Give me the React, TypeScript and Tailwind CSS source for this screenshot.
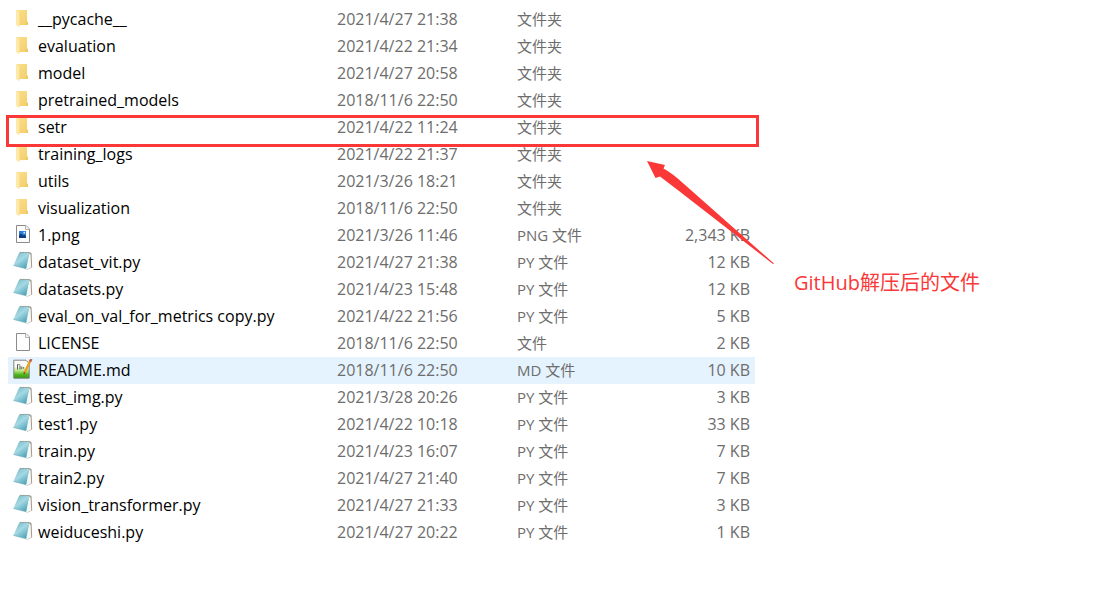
import type { ReactNode } from 'react';

type FileKind = 'folder' | 'image' | 'script' | 'blank' | 'markdown';

interface FileRow {
  name: string;
  modified: string;
  type: string;
  size?: string;
  kind: FileKind;
  selected?: boolean;
}

const files: FileRow[] = [
  { name: '__pycache__', modified: '2021/4/27 21:38', type: '文件夹', kind: 'folder' },
  { name: 'evaluation', modified: '2021/4/22 21:34', type: '文件夹', kind: 'folder' },
  { name: 'model', modified: '2021/4/27 20:58', type: '文件夹', kind: 'folder' },
  { name: 'pretrained_models', modified: '2018/11/6 22:50', type: '文件夹', kind: 'folder' },
  { name: 'setr', modified: '2021/4/22 11:24', type: '文件夹', kind: 'folder' },
  { name: 'training_logs', modified: '2021/4/22 21:37', type: '文件夹', kind: 'folder' },
  { name: 'utils', modified: '2021/3/26 18:21', type: '文件夹', kind: 'folder' },
  { name: 'visualization', modified: '2018/11/6 22:50', type: '文件夹', kind: 'folder' },
  { name: '1.png', modified: '2021/3/26 11:46', type: 'PNG 文件', size: '2,343 KB', kind: 'image' },
  { name: 'dataset_vit.py', modified: '2021/4/27 21:38', type: 'PY 文件', size: '12 KB', kind: 'script' },
  { name: 'datasets.py', modified: '2021/4/23 15:48', type: 'PY 文件', size: '12 KB', kind: 'script' },
  { name: 'eval_on_val_for_metrics copy.py', modified: '2021/4/22 21:56', type: 'PY 文件', size: '5 KB', kind: 'script' },
  { name: 'LICENSE', modified: '2018/11/6 22:50', type: '文件', size: '2 KB', kind: 'blank' },
  { name: 'README.md', modified: '2018/11/6 22:50', type: 'MD 文件', size: '10 KB', kind: 'markdown', selected: true },
  { name: 'test_img.py', modified: '2021/3/28 20:26', type: 'PY 文件', size: '3 KB', kind: 'script' },
  { name: 'test1.py', modified: '2021/4/22 10:18', type: 'PY 文件', size: '33 KB', kind: 'script' },
  { name: 'train.py', modified: '2021/4/23 16:07', type: 'PY 文件', size: '7 KB', kind: 'script' },
  { name: 'train2.py', modified: '2021/4/27 21:40', type: 'PY 文件', size: '7 KB', kind: 'script' },
  { name: 'vision_transformer.py', modified: '2021/4/27 21:33', type: 'PY 文件', size: '3 KB', kind: 'script' },
  { name: 'weiduceshi.py', modified: '2021/4/27 20:22', type: 'PY 文件', size: '1 KB', kind: 'script' },
];

const icons: Record<FileKind, ReactNode> = {
  folder: (
    <>
      <path d="M3.5 2H14V13.5L15 14.2V17H5Z" fill="url(#folderBody)" />
      <path d="M14 13.5L15 14.2V17H13V14.5Z" fill="#efc764" />
      <path d="M3 2.2L6.8 4V16.2L5.8 18.8L3 17Z" fill="#ffe9a8" />
      <path d="M6.8 4V16.2L5.8 18.8" fill="none" stroke="#f0cf78" strokeWidth="0.5" />
    </>
  ),
  image: (
    <>
      <path d="M3.5 1.5H13L16.5 5V18.5H3.5Z" fill="#fdfdfd" stroke="#8b8b8b" />
      <path d="M12.5 1.5V5.5H16.5" fill="#f3f3f3" stroke="#a5a5a5" strokeWidth="0.8" />
      <rect x="6" y="7" width="7" height="7" fill="#2f7fd6" />
      <path d="M6 11L8 9.5L10.3 11.5L11.3 10.8L13 12V14H6Z" fill="#0b3f7f" />
      <circle cx="11.3" cy="8.7" r="0.9" fill="#d9f0ff" />
    </>
  ),
  script: (
    <>
      <path d="M7 1L17.2 1.2L18.6 2.4L19.2 16.6L14 18.8Z" fill="#a49d8e" />
      <path d="M16.4 2.6L17.6 4L18.2 16.6L13.8 18.4L12 17.6Z" fill="#f7f7f5" />
      <path d="M6.2 1.6H16.4L13.2 17.8L0.4 14.4Z" fill="url(#scriptCover)" />
      <path d="M13.2 17.8L0.4 14.4" stroke="#6fa9b5" strokeWidth="0.6" />
      <path d="M7 1.4H16.6" stroke="#8b9193" strokeWidth="0.8" strokeDasharray="1 0.6" />
    </>
  ),
  blank: (
    <>
      <path d="M3.5 1.5H13L16.5 5V18.5H3.5Z" fill="#fdfdfd" stroke="#8b8b8b" />
      <path d="M12.5 1.5V5.5H16.5" fill="#f3f3f3" stroke="#a5a5a5" strokeWidth="0.8" />
    </>
  ),
  markdown: (
    <>
      <path d="M0.8 1.2H13L16.2 4.5V19.2H0.8Z" fill="url(#markdownPage)" stroke="#777" strokeWidth="0.9" />
      <path d="M4.5 5.5V10.5M7 6.5V10.5M8.8 7.5V10M10.6 8.2V9.6" stroke="#333" strokeWidth="0.8" />
      <path d="M4.5 5.7H7" stroke="#333" strokeWidth="0.6" />
      <path d="M17.4 1.5L11.5 14" stroke="#e9a023" strokeWidth="2.4" />
      <path d="M18.4 0L17 2.6" stroke="#c3604d" strokeWidth="2.4" />
      <path d="M10.6 12.8L12.7 14L10.7 15.8Z" fill="#6b5030" />
    </>
  ),
};

function FileIcon({ kind }: { kind: FileKind }) {
  return (
    <svg className="h-5 w-5 shrink-0" viewBox="0 0 20 20" fill="none" aria-hidden="true">
      {icons[kind]}
    </svg>
  );
}

// Gradients shared by all the file icons
function IconGradients() {
  return (
    <svg className="absolute h-0 w-0" aria-hidden="true">
      <defs>
        <linearGradient id="folderBody" x1="0" y1="0" x2="1" y2="1">
          <stop offset="0" stopColor="#fbe08d" />
          <stop offset="1" stopColor="#f3cd68" />
        </linearGradient>
        <linearGradient id="scriptCover" x1="0" y1="0" x2="0.7" y2="1">
          <stop offset="0" stopColor="#6fb4c4" />
          <stop offset="0.5" stopColor="#a5d9e3" />
          <stop offset="1" stopColor="#4ba3b8" />
        </linearGradient>
        <linearGradient id="markdownPage" x1="0" y1="0" x2="0" y2="1">
          <stop offset="0.35" stopColor="#f8fbf4" />
          <stop offset="0.6" stopColor="#b4e37d" />
          <stop offset="0.8" stopColor="#4cb81c" />
          <stop offset="1" stopColor="#3a9a14" />
        </linearGradient>
      </defs>
    </svg>
  );
}

export default function App() {
  return (
    <main className="relative min-h-screen bg-white px-2 pt-1.5 font-['Open_Sans','Noto_Sans_CJK_SC',sans-serif] text-[16px] leading-[27px] text-[#6d6d6d]">
      <IconGradients />

      <table className="w-full max-w-[747px] table-fixed border-collapse">
        <colgroup>
          <col />
          <col className="w-[180px]" />
          <col className="w-[118px]" />
          <col className="w-[120px]" />
        </colgroup>
        <tbody>
          {files.map((file) => (
            <tr key={file.name} className={file.selected ? 'bg-[#e5f3ff]' : ''}>
              <td className="p-0">
                <div className="flex h-[27px] items-start gap-[5px] pl-[5px] whitespace-nowrap text-black">
                  <div className="pt-0.5">
                    <FileIcon kind={file.kind} />
                  </div>
                  <span>{file.name}</span>
                </div>
              </td>
              <td className="p-0 whitespace-nowrap">{file.modified}</td>
              <td className="p-0 text-[15px] leading-[27px] whitespace-nowrap">{file.type}</td>
              <td className="p-0 pr-[5px] text-right whitespace-nowrap">{file.size}</td>
            </tr>
          ))}
        </tbody>
      </table>

      {/* Annotations */}
      <div className="absolute top-[115px] left-[6px] h-8 w-[753px] border-3 border-[#fb3838]" />
      <svg className="absolute top-[160px] left-[646px] h-[105px] w-[130px]" viewBox="0 0 130 105" aria-hidden="true">
        <path d="M1 1L19 5L17.5 8.5Q26 13 38 24L128 103.5L127 104L33 31L14 16.5L9.5 18Z" fill="#fb3838" />
      </svg>
      <p className="absolute top-[269px] left-[794px] text-[20px] text-[#fb3838]">GitHub解压后的文件</p>
    </main>
  );
}
